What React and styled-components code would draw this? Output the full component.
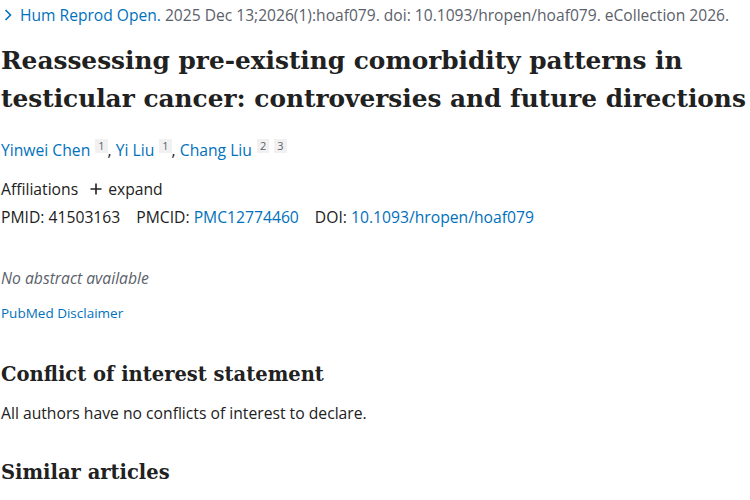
import styled, { createGlobalStyle } from "styled-components";

const GlobalStyle = createGlobalStyle`
  body {
    margin: 0;
    background: #ffffff;
    font-family: "Open Sans", "Noto Sans", sans-serif;
    color: #212121;
  }
`;

const Page = styled.div`
  width: 750px;
  height: 500px;
  overflow: hidden;
  padding: 0 0 0 1px;
  box-sizing: border-box;
`;

const Citation = styled.div`
  display: flex;
  align-items: center;
  gap: 8px;
  height: 30px;
  padding-left: 3px;
  font-size: 15.6px;
  color: #5b616b;
  white-space: nowrap;
`;

const Link = styled.a`
  color: #0071bc;
  text-decoration: none;
`;

const Title = styled.h1`
  margin: 12px 0 0;
  font-family: "DejaVu Serif", serif;
  font-weight: 700;
  font-size: 24.8px;
  line-height: 38px;
  color: #212121;
`;

const Authors = styled.div`
  margin-top: 21px;
  font-size: 15.7px;
  line-height: 22px;
`;

const Sup = styled.sup`
  display: inline-block;
  margin-left: 5px;
  padding: 0 3px;
  background: #f1f1f1;
  color: #5b616b;
  font-size: 11px;
  line-height: 14px;
  vertical-align: 6px;
`;

const Row = styled.div`
  display: flex;
  align-items: center;
  gap: ${(p) => p.gap || "14px"};
  margin-top: ${(p) => p.top || "0"};
  font-size: 15.7px;
  line-height: 26px;
`;

const Expand = styled.span`
  display: inline-flex;
  align-items: center;
  gap: 6px;
`;

const Italic = styled.p`
  margin: 37px 0 0;
  font-style: italic;
  font-size: 15.7px;
  line-height: 22px;
  color: #5b616b;
`;

const Small = styled.div`
  margin-top: 15px;
  font-size: 13.5px;
  line-height: 18px;
`;

const Heading = styled.h2`
  margin: ${(p) => p.top || "38px"} 0 0;
  font-family: "DejaVu Serif", serif;
  font-weight: 700;
  font-size: 19.5px;
  line-height: 30px;
`;

const Text = styled.p`
  margin: 12px 0 0;
  font-size: 15.7px;
  line-height: 22px;
`;

function Chevron() {
  return (
    <svg width="8" height="12" viewBox="0 0 8 12" fill="none">
      <path d="M1.5 1 L6.5 6 L1.5 11" stroke="#0071bc" strokeWidth="1.6" />
    </svg>
  );
}

function Plus() {
  return (
    <svg width="12" height="12" viewBox="0 0 12 12">
      <path d="M6 0.5 V11.5 M0.5 6 H11.5" stroke="#212121" strokeWidth="1.6" />
    </svg>
  );
}

export default function App() {
  return (
    <Page>
      <GlobalStyle />
      <Citation>
        <Chevron />
        <span>
          <Link>Hum Reprod Open.</Link> 2025 Dec 13;2026(1):hoaf079. doi:
          10.1093/hropen/hoaf079. eCollection 2026.
        </span>
      </Citation>
      <Title>
        Reassessing pre-existing comorbidity patterns in testicular cancer:
        controversies and future directions
      </Title>
      <Authors>
        <Link>Yinwei Chen</Link>
        <Sup>1</Sup>, <Link>Yi Liu</Link>
        <Sup>1</Sup>, <Link>Chang Liu</Link>
        <Sup>2</Sup>
        <Sup>3</Sup>
      </Authors>
      <Row top="15px" gap="12px">
        <span>Affiliations</span>
        <Expand>
          <Plus />
          expand
        </Expand>
      </Row>
      <Row top="2px" gap="16px">
        <span>PMID: 41503163</span>
        <span>
          PMCID: <Link>PMC12774460</Link>
        </span>
        <span>
          DOI: <Link>10.1093/hropen/hoaf079</Link>
        </span>
      </Row>
      <Italic>No abstract available</Italic>
      <Small>
        <Link>PubMed Disclaimer</Link>
      </Small>
      <Heading>Conflict of interest statement</Heading>
      <Text>All authors have no conflicts of interest to declare.</Text>
      <Heading top="34px">Similar articles</Heading>
    </Page>
  );
}
